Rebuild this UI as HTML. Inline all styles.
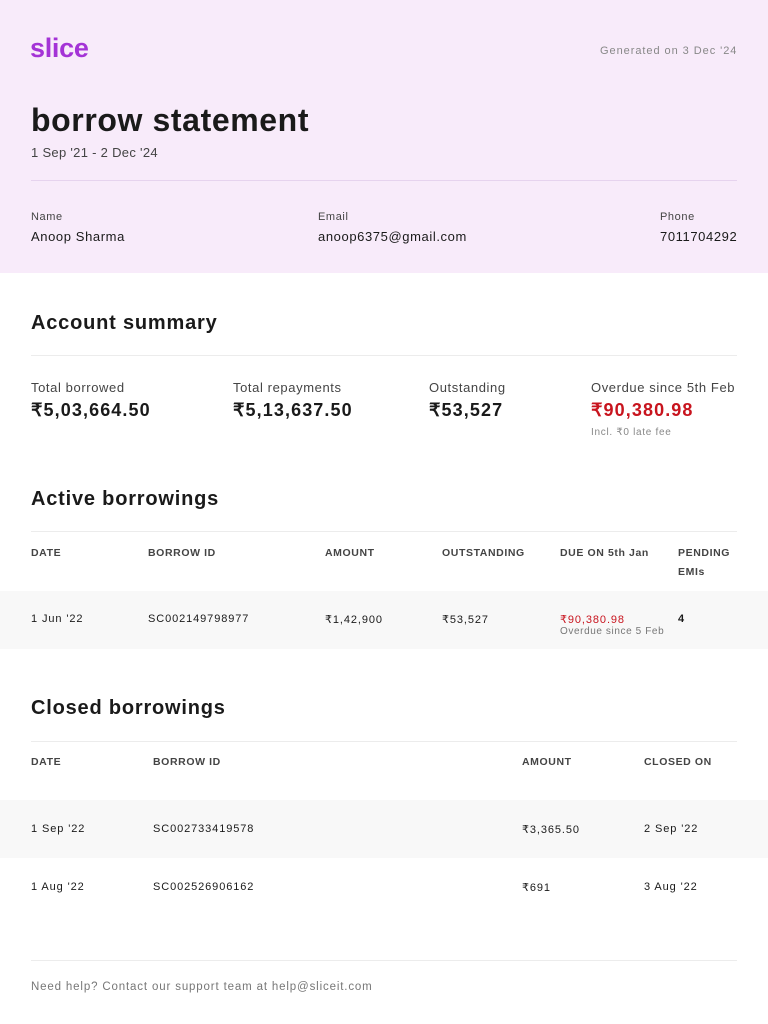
<!DOCTYPE html>
<html><head><meta charset="utf-8"><style>
*{margin:0;padding:0;box-sizing:border-box}
body{width:768px;height:1024px;background:#fff;font-family:"Liberation Sans",sans-serif;color:#1a1a1a;position:relative;overflow:hidden}
.a{position:absolute;white-space:nowrap}
.hdr{position:absolute;left:0;top:0;width:768px;height:273px;background:#f8ebfa}
.line{position:absolute;left:31px;width:706px;height:1px;background:#ececec}
.lbl{font-size:11px;color:#444;letter-spacing:.6px}
.val{font-size:13px;color:#1a1a1a;letter-spacing:.6px}
.h2{font-size:20px;font-weight:bold;color:#1a1a1a;letter-spacing:.8px}
.big{font-size:18px;font-weight:bold;letter-spacing:1.1px}
.th{font-size:10.5px;font-weight:bold;color:#444;letter-spacing:.6px;line-height:19px}
.td{font-size:11px;color:#1a1a1a;letter-spacing:.9px}
.row{position:absolute;left:0;width:768px;height:58px;background:#f8f8f8}
</style></head><body>
<div class="hdr"></div>
<div class="a" style="left:30px;top:33px;font-size:27px;font-weight:bold;color:#a433d6;letter-spacing:-.3px">slice</div>
<div class="a" style="left:600px;top:45px;font-size:11px;color:#888;letter-spacing:.95px">Generated on 3 Dec '24</div>
<div class="a" style="left:31px;top:102px;font-size:32px;font-weight:bold;color:#1a1a1a;letter-spacing:.6px">borrow statement</div>
<div class="a" style="left:31px;top:145px;font-size:13px;color:#444;letter-spacing:.3px">1 Sep '21 - 2 Dec '24</div>
<div class="line" style="top:180px;background:#e6d3ee"></div>
<div class="a lbl" style="left:31px;top:211px">Name</div>
<div class="a val" style="left:31px;top:229px">Anoop Sharma</div>
<div class="a lbl" style="left:318px;top:211px">Email</div>
<div class="a val" style="left:318px;top:229px">anoop6375@gmail.com</div>
<div class="a lbl" style="left:660px;top:211px">Phone</div>
<div class="a val" style="left:660px;top:229px">7011704292</div>

<div class="a h2" style="left:31px;top:312px">Account summary</div>
<div class="line" style="top:355px"></div>
<div class="a val" style="left:31px;top:380px;color:#444">Total borrowed</div>
<div class="a big" style="left:31px;top:400px">₹5,03,664.50</div>
<div class="a val" style="left:233px;top:380px;color:#444">Total repayments</div>
<div class="a big" style="left:233px;top:400px">₹5,13,637.50</div>
<div class="a val" style="left:429px;top:380px;color:#444">Outstanding</div>
<div class="a big" style="left:429px;top:400px">₹53,527</div>
<div class="a val" style="left:591px;top:380px;color:#444">Overdue since 5th Feb</div>
<div class="a big" style="left:591px;top:400px;color:#c8141e">₹90,380.98</div>
<div class="a" style="left:591px;top:427px;font-size:10px;color:#888;letter-spacing:.7px">Incl. ₹0 late fee</div>

<div class="a h2" style="left:31px;top:488px">Active borrowings</div>
<div class="line" style="top:531px"></div>
<div class="a th" style="left:31px;top:544px">DATE</div>
<div class="a th" style="left:148px;top:544px">BORROW ID</div>
<div class="a th" style="left:325px;top:544px">AMOUNT</div>
<div class="a th" style="left:442px;top:544px">OUTSTANDING</div>
<div class="a th" style="left:560px;top:544px">DUE ON 5th Jan</div>
<div class="a th" style="left:678px;top:544px">PENDING<br>EMIs</div>
<div class="row" style="top:591px"></div>
<div class="a td" style="left:31px;top:613px">1 Jun '22</div>
<div class="a td" style="left:148px;top:613px">SC002149798977</div>
<div class="a td" style="left:325px;top:613px">₹1,42,900</div>
<div class="a td" style="left:442px;top:613px">₹53,527</div>
<div class="a td" style="left:560px;top:613px;color:#c8141e">₹90,380.98</div>
<div class="a" style="left:560px;top:626px;font-size:10px;color:#777;letter-spacing:.6px">Overdue since 5 Feb</div>
<div class="a td" style="left:678px;top:613px;font-weight:bold">4</div>

<div class="a h2" style="left:31px;top:697px">Closed borrowings</div>
<div class="line" style="top:741px"></div>
<div class="a th" style="left:31px;top:753px">DATE</div>
<div class="a th" style="left:153px;top:753px">BORROW ID</div>
<div class="a th" style="left:522px;top:753px">AMOUNT</div>
<div class="a th" style="left:644px;top:753px">CLOSED ON</div>
<div class="row" style="top:800px"></div>
<div class="a td" style="left:31px;top:823px">1 Sep '22</div>
<div class="a td" style="left:153px;top:823px">SC002733419578</div>
<div class="a td" style="left:522px;top:823px">₹3,365.50</div>
<div class="a td" style="left:644px;top:823px">2 Sep '22</div>
<div class="a td" style="left:31px;top:881px">1 Aug '22</div>
<div class="a td" style="left:153px;top:881px">SC002526906162</div>
<div class="a td" style="left:522px;top:881px">₹691</div>
<div class="a td" style="left:644px;top:881px">3 Aug '22</div>

<div class="line" style="top:960px"></div>
<div class="a" style="left:31px;top:981px;font-size:11.5px;color:#777;letter-spacing:.85px">Need help? Contact our support team at help@sliceit.com</div>
</body></html>
